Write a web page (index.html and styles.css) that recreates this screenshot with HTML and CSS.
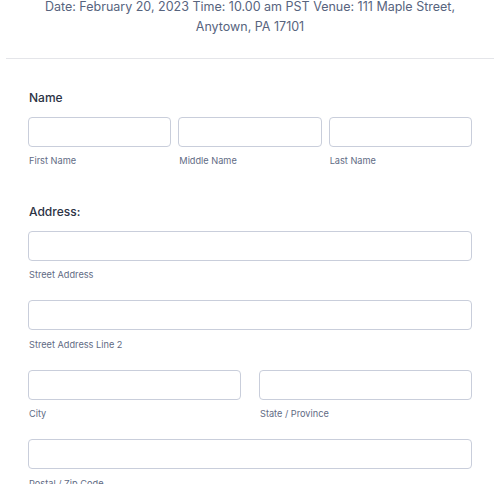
FILE: index.html
```html
<!DOCTYPE html>
<html lang="en">
<head>
<meta charset="utf-8">
<title>Registration Form</title>
<link rel="stylesheet" href="styles.css">
</head>
<body>
<div class="page">
  <header class="header">
    <p class="info">Date: February 20, 2023 Time: 10.00 am PST Venue: 111 Maple Street, Anytown, PA 17101</p>
  </header>
  <form class="form">
    <section class="section">
      <h2 class="label">Name</h2>
      <div class="row row-3">
        <div class="field"><input class="input" type="text"><span class="sub">First Name</span></div>
        <div class="field"><input class="input" type="text"><span class="sub">Middle Name</span></div>
        <div class="field"><input class="input" type="text"><span class="sub">Last Name</span></div>
      </div>
    </section>
    <section class="section">
      <h2 class="label">Address:</h2>
      <div class="stack">
        <div class="field"><input class="input" type="text"><span class="sub">Street Address</span></div>
        <div class="field"><input class="input" type="text"><span class="sub">Street Address Line 2</span></div>
        <div class="row row-2">
          <div class="field"><input class="input" type="text"><span class="sub">City</span></div>
          <div class="field"><input class="input" type="text"><span class="sub">State / Province</span></div>
        </div>
        <div class="field"><input class="input" type="text"><span class="sub">Postal / Zip Code</span></div>
      </div>
    </section>
  </form>
</div>
</body>
</html>
```
FILE: styles.css
```css
* { box-sizing: border-box; }
html, body { margin: 0; padding: 0; background: #fff; }
body {
  font-family: Inter, "Noto Sans", sans-serif;
  color: #2c3345;
  overflow: hidden;
}
.page { margin-top: -3.5px; }
.header {
  margin: 0 6px;
  padding-bottom: 21.5px;
  border-bottom: 1px solid #e4e5e9;
}
.info {
  margin: 0;
  text-align: center;
  font-size: 12.5px;
  line-height: 20px;
  color: #57647e;
  padding: 0 30px;
}
.form {
  padding: 28.8px 28px 0;
}
.section + .section { margin-top: 33.6px; }
.label {
  margin: 0 0 9px 1px;
  font-size: 12px;
  line-height: 20px;
  font-weight: 500;
  color: #2c3345;
}
.stack {
  display: flex;
  flex-direction: column;
  gap: 18px;
}
.row { display: grid; }
.row-3 { grid-template-columns: repeat(3, 1fr); gap: 7px; }
.row-2 { grid-template-columns: repeat(2, 1fr); gap: 18px; }
.field { display: flex; flex-direction: column; }
.input {
  display: block;
  width: 100%;
  height: 30px;
  margin: 0;
  border: 1px solid #c9cedb;
  border-radius: 4px;
  background: #fff;
  font: inherit;
}
.sub {
  margin: 7.5px 0 0 1px;
  font-size: 9.2px;
  line-height: 14px;
  color: #5f6b84;
}
```
